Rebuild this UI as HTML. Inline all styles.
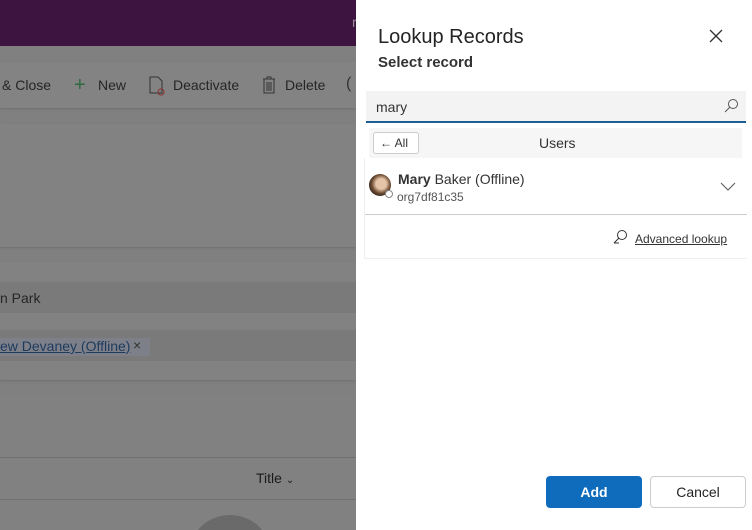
<!DOCTYPE html>
<html style="width:752px;height:530px;overflow:hidden"><head><style>
*{margin:0;padding:0;box-sizing:border-box}
body{width:752px;height:530px;overflow:hidden;position:relative;background:#808080;font-family:"Liberation Sans",sans-serif;font-size:14px;color:#222}
.a{position:absolute}
</style></head><body>
<div class="a" style="left:0;top:0;width:356px;height:46px;background:#3d1340"></div>
<div class="a" style="left:352px;top:14px;color:#9a8a9c;font-size:14px">r</div>
<div class="a" style="left:0;top:62px;width:356px;height:46px;background:#838383;box-shadow:0 1px 2px #707070"></div>
<div class="a" style="left:2px;top:77px;font-size:14px;color:#262626">&amp; Close</div>
<div class="a" style="left:74px;top:76px;font-size:20px;color:#2f6a40;line-height:18px">+</div>
<div class="a" style="left:98px;top:77px;color:#262626">New</div>
<svg class="a" style="left:149px;top:76px" width="18" height="20"><path d="M1 1h8l4 4v12H1z" fill="none" stroke="#333"/><circle cx="12" cy="16" r="3" fill="none" stroke="#8a3030"/></svg>
<div class="a" style="left:173px;top:77px;color:#262626">Deactivate</div>
<svg class="a" style="left:262px;top:76px" width="14" height="18"><path d="M1 3h12M5 3V1h4v2M2 3v14h10V3M5 6v9M7 6v9M9 6v9" fill="none" stroke="#333"/></svg>
<div class="a" style="left:285px;top:77px;color:#262626">Delete</div>
<div class="a" style="left:346px;top:75px;color:#333;font-size:16px">(</div>
<div class="a" style="left:0;top:124px;width:356px;height:123px;background:#828282;box-shadow:0 1px 2px #707070"></div>
<div class="a" style="left:0;top:262px;width:356px;height:118px;background:#828282;box-shadow:0 1px 2px #707070"></div>
<div class="a" style="left:0;top:282px;width:356px;height:31px;background:#7a7a7a"></div>
<div class="a" style="left:0;top:290px;color:#262626">n Park</div>
<div class="a" style="left:0;top:330px;width:356px;height:31px;background:#7a7a7a"></div>
<div class="a" style="left:0;top:338px;width:150px;height:18px;background:#7d8088"></div>
<div class="a" style="left:0;top:338px;color:#1e3a5f;text-decoration:underline">ew Devaney (Offline)</div>
<div class="a" style="left:133px;top:337px;color:#333">×</div>
<div class="a" style="left:0;top:396px;width:356px;height:134px;background:#818181"></div>
<div class="a" style="left:0;top:457px;width:356px;height:1px;background:#6f6f6f"></div>
<div class="a" style="left:0;top:499px;width:356px;height:1px;background:#6f6f6f"></div>
<div class="a" style="left:256px;top:470px;color:#1a1a1a">Title <span style="font-size:10px">⌄</span></div>
<svg class="a" style="left:188px;top:515px" width="84" height="15"><path d="M9.8 15A42 42 0 0 1 74.2 15Z" fill="#6a6a6a"/></svg>

<div class="a" style="left:356px;top:0;width:396px;height:530px;background:#fff"></div>
<div class="a" style="left:378px;top:26px;font-size:20px;color:#242424">Lookup Records</div>
<div class="a" style="left:378px;top:54px;font-size:15px;font-weight:bold;color:#333">Select record</div>
<svg class="a" style="left:709px;top:29px" width="14" height="14"><path d="M1 1l12 12M13 1L1 13" stroke="#333" stroke-width="1.3"/></svg>
<div class="a" style="left:366px;top:91px;width:380px;height:32px;background:#f3f3f3;border-bottom:2px solid #1d5f94"></div>
<div class="a" style="left:376px;top:99px;color:#333">mary</div>
<svg class="a" style="left:723px;top:98px" width="16" height="16"><circle cx="10" cy="6" r="4.5" fill="none" stroke="#555"/><path d="M7 9l-5 5" stroke="#555"/></svg>
<div class="a" style="left:369px;top:128px;width:373px;height:30px;background:#f6f6f6"></div>
<div class="a" style="left:373px;top:132px;width:46px;height:22px;border:1px solid #ccc;border-radius:3px;background:#fff"></div>
<div class="a" style="left:380px;top:136px;font-size:12px;color:#333">← All</div>
<div class="a" style="left:539px;top:135px;font-size:14px;color:#333">Users</div>
<div class="a" style="left:369px;top:174px;width:22px;height:22px;border-radius:50%;background:radial-gradient(circle at 55% 45%,#e6c4a8 30%,#6b4a30 55%,#2a2020 80%)"></div>
<div class="a" style="left:385px;top:190px;width:8px;height:8px;border-radius:50%;background:#fff;border:1px solid #888"></div>
<div class="a" style="left:398px;top:171px;color:#333"><b>Mary</b> Baker (Offline)</div>
<div class="a" style="left:397px;top:190px;font-size:12px;color:#555">org7df81c35</div>
<svg class="a" style="left:720px;top:182px" width="16" height="10"><path d="M1 1l7 7 7-7" fill="none" stroke="#555"/></svg>
<div class="a" style="left:364px;top:214px;width:383px;height:1px;background:#ccc"></div>
<div class="a" style="left:364px;top:158px;width:1px;height:100px;background:#eee"></div>
<div class="a" style="left:364px;top:258px;width:383px;height:1px;background:#eee"></div>
<svg class="a" style="left:612px;top:229px" width="16" height="16"><circle cx="10" cy="6" r="4.5" fill="none" stroke="#333"/><path d="M7 9l-5 5M2 14h5" stroke="#333"/></svg>
<div class="a" style="left:635px;top:232px;font-size:12px;color:#333;text-decoration:underline">Advanced lookup</div>
<div class="a" style="left:546px;top:476px;width:96px;height:32px;background:#0f6cbd;border-radius:4px;color:#fff;font-weight:bold;text-align:center;line-height:32px">Add</div>
<div class="a" style="left:650px;top:476px;width:96px;height:32px;border:1px solid #ccc;border-radius:4px;color:#242424;text-align:center;line-height:30px">Cancel</div>
</body></html>
